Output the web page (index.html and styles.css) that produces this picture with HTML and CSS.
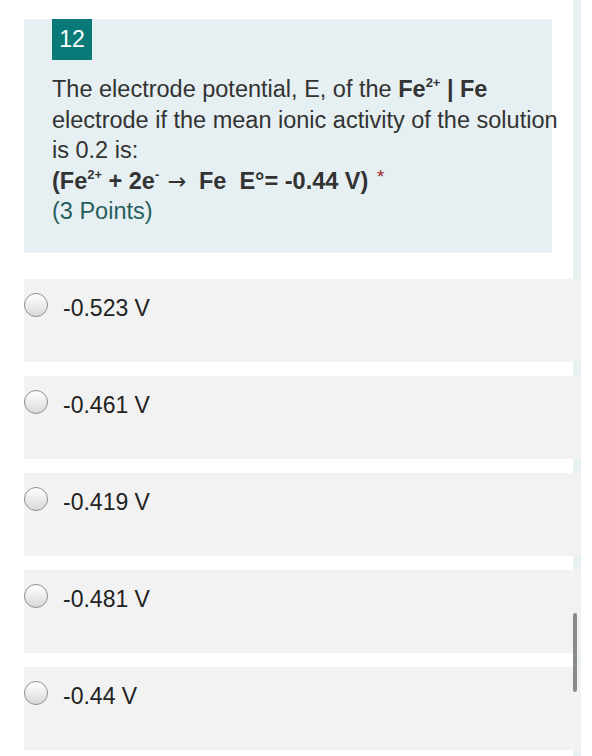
FILE: index.html
```html
<!DOCTYPE html>
<html lang="en">
<head>
<meta charset="utf-8">
<title>Question 12</title>
<link rel="stylesheet" href="styles.css">
</head>
<body>
<div class="page">
  <section class="question">
    <div class="badge">12</div>
    <div class="qtext">
      <div class="line">The electrode potential, E, of the <b>Fe<sup>2+</sup> | Fe</b></div>
      <div class="line">electrode if the mean ionic activity of the solution</div>
      <div class="line">is 0.2 is:</div>
      <div class="line"><b>(Fe<sup>2+</sup> + 2e<sup>-</sup> <span class="arrow">&rarr;</span> Fe&nbsp; E°= -0.44 V)</b> <span class="req">*</span></div>
      <div class="line points">(3 Points)</div>
    </div>
  </section>
  <div class="options">
    <label class="option"><span class="radio"></span><span class="label">-0.523 V</span></label>
    <label class="option"><span class="radio"></span><span class="label">-0.461 V</span></label>
    <label class="option"><span class="radio"></span><span class="label">-0.419 V</span></label>
    <label class="option"><span class="radio"></span><span class="label">-0.481 V</span></label>
    <label class="option"><span class="radio"></span><span class="label">-0.44 V</span></label>
  </div>
  <div class="scrollbar"></div>
</div>
</body>
</html>
```

FILE: styles.css
```css
html, body {
  margin: 0;
  padding: 0;
  overflow: hidden;
  background: #ffffff;
}

.page {
  position: relative;
  min-height: 756px;
  padding: 19px 0 0 24px;
  box-sizing: border-box;
  font-family: "Liberation Sans", Arial, sans-serif;
  color: #333333;
  background: linear-gradient(to right, #ffffff 573px, #e8f1f2 573px, #e8f1f2 581px, #ffffff 581px);
}

.question {
  width: 528px;
  box-sizing: border-box;
  background: #e6eff1;
  padding: 0 0 26.5px 28px;
}

.badge {
  width: 40px;
  height: 41px;
  background: #0a7a78;
  color: #ffffff;
  font-size: 23px;
  display: flex;
  align-items: center;
  justify-content: center;
}

.qtext {
  margin-top: 14px;
  font-size: 23.5px;
  line-height: 30.5px;
}

.line {
  white-space: nowrap;
  height: 30.5px;
}

.qtext b {
  font-weight: bold;
  color: #333333;
}

.qtext sup {
  font-size: 0.55em;
  line-height: 0;
  vertical-align: 0.75em;
}

.arrow {
  font-family: "DejaVu Sans", sans-serif;
  font-weight: normal;
  font-size: 0.95em;
  line-height: 0;
  margin: 0 6px 0 2px;
}

.req {
  color: #a4262c;
  font-size: 0.8em;
  line-height: 0;
  vertical-align: 0.3em;
  margin-left: 2px;
}

.points {
  color: #265e5e;
}

.options {
  margin-top: 26px;
  display: flex;
  flex-direction: column;
  gap: 14px;
}

.option {
  display: flex;
  align-items: flex-start;
  width: 557px;
  height: 83px;
  box-sizing: border-box;
  padding-top: 14px;
  background: #f2f2f2;
}

.radio {
  flex: none;
  width: 24px;
  height: 24px;
  box-sizing: border-box;
  border-radius: 50%;
  border: 1px solid #8e8e8e;
  background: linear-gradient(#ffffff, #d9d9d9);
}

.label {
  margin-left: 15px;
  font-size: 23px;
  line-height: 30px;
  color: #222222;
}

.scrollbar {
  position: absolute;
  left: 573px;
  top: 613px;
  width: 4px;
  height: 79px;
  border-radius: 2px;
  background: #8a8a8a;
}
```
